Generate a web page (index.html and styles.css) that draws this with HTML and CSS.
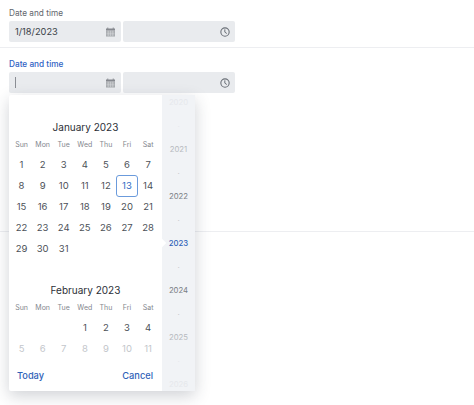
FILE: index.html
```html
<!DOCTYPE html>
<html lang="en">
<head>
    <meta charset="UTF-8">
    <meta name="viewport" content="width=device-width, initial-scale=1.0">
    <title>Date and time</title>
    <link rel="stylesheet" href="styles.css">
</head>
<body>
    <section class="field-section first">
        <label class="field-label">Date and time</label>
        <div class="field-row">
            <div class="input date-input">
                <span class="input-value">1/18/2023</span>
                <svg class="icon cal-icon" viewBox="0 0 10 10"><path fill="#85888e" d="M1.5 0h1v1h5V0h1v1H10v2.2H0V1h1.5z"/><path fill="#a3a6ab" d="M0 3.2h10V10H0z"/><path stroke="#dfe1e4" stroke-width=".5" fill="none" d="M.5 5h9M.5 6.6h9M.5 8.2h9M2.5 3.6v6M5 3.6v6M7.5 3.6v6"/></svg>
            </div>
            <div class="input time-input">
                <svg class="icon" viewBox="0 0 12 12"><circle cx="6" cy="6" r="5" fill="none" stroke="#6b7078" stroke-width="1.3"/><path d="M5.8 2.8v3.4l2.4 1.6" fill="none" stroke="#6b7078" stroke-width="1.2"/></svg>
            </div>
        </div>
    </section>

    <section class="field-section second">
        <label class="field-label active">Date and time</label>
        <div class="field-row">
            <div class="input date-input">
                <span class="caret"></span>
                <svg class="icon cal-icon" viewBox="0 0 10 10"><path fill="#85888e" d="M1.5 0h1v1h5V0h1v1H10v2.2H0V1h1.5z"/><path fill="#a3a6ab" d="M0 3.2h10V10H0z"/><path stroke="#dfe1e4" stroke-width=".5" fill="none" d="M.5 5h9M.5 6.6h9M.5 8.2h9M2.5 3.6v6M5 3.6v6M7.5 3.6v6"/></svg>
            </div>
            <div class="input time-input">
                <svg class="icon" viewBox="0 0 12 12"><circle cx="6" cy="6" r="5" fill="none" stroke="#6b7078" stroke-width="1.3"/><path d="M5.8 2.8v3.4l2.4 1.6" fill="none" stroke="#6b7078" stroke-width="1.2"/></svg>
            </div>
        </div>
    </section>

    <div class="picker">
        <div class="calendar">
            <div class="month">
                <h2 class="month-title">January 2023</h2>
                <div class="days">
                    <span class="dow">Sun</span><span class="dow">Mon</span><span class="dow">Tue</span><span class="dow">Wed</span><span class="dow">Thu</span><span class="dow">Fri</span><span class="dow">Sat</span>
                    <span>1</span><span>2</span><span>3</span><span>4</span><span>5</span><span>6</span><span>7</span>
                    <span>8</span><span>9</span><span>10</span><span>11</span><span>12</span><span class="today">13</span><span>14</span>
                    <span>15</span><span>16</span><span>17</span><span>18</span><span>19</span><span>20</span><span>21</span>
                    <span>22</span><span>23</span><span>24</span><span>25</span><span>26</span><span>27</span><span>28</span>
                    <span>29</span><span>30</span><span>31</span>
                </div>
            </div>
            <div class="month feb">
                <h2 class="month-title">February 2023</h2>
                <div class="days">
                    <span class="dow">Sun</span><span class="dow">Mon</span><span class="dow">Tue</span><span class="dow">Wed</span><span class="dow">Thu</span><span class="dow">Fri</span><span class="dow">Sat</span>
                    <span></span><span></span><span></span><span>1</span><span>2</span><span>3</span><span>4</span>
                    <span class="fade">5</span><span class="fade">6</span><span class="fade">7</span><span class="fade">8</span><span class="fade">9</span><span class="fade">10</span><span class="fade">11</span>
                </div>
            </div>
            <div class="picker-footer">
                <a class="link">Today</a>
                <a class="link">Cancel</a>
            </div>
        </div>
        <div class="years">
            <span class="year ghost">2020</span>
            <span class="tick ghost">&middot;</span>
            <span class="year dim">2021</span>
            <span class="tick">&middot;</span>
            <span class="year">2022</span>
            <span class="tick">&middot;</span>
            <span class="year current">2023</span>
            <span class="tick">&middot;</span>
            <span class="year">2024</span>
            <span class="tick">&middot;</span>
            <span class="year dim">2025</span>
            <span class="tick ghost">&middot;</span>
            <span class="year ghost">2026</span>
        </div>
    </div>
</body>
</html>
```

FILE: styles.css
```css
* {
    margin: 0;
    padding: 0;
    box-sizing: border-box;
}

body {
    position: relative;
    height: 405px;
    overflow: hidden;
    background: #fff;
    color: #3a3f47;
    font-family: Inter, "Liberation Sans", sans-serif;
    font-size: 10px;
}

.field-section {
    padding: 7px 9px 0;
    border-bottom: 1px solid #edeef1;
}

.first {
    height: 48px;
}

.second {
    height: 184px;
    padding-top: 10px;
}

.field-label {
    display: block;
    height: 14px;
    font-size: 8.25px;
    line-height: 12px;
    color: #62666d;
}

.field-label.active {
    color: #2f62c4;
    font-weight: 500;
}

.field-row {
    display: flex;
    gap: 2px;
    width: 226px;
}

.input {
    flex: 1;
    height: 21px;
    display: flex;
    align-items: center;
    justify-content: space-between;
    padding: 0 5px 0 6px;
    background: #e9ebee;
    border-radius: 2px;
}

.time-input {
    justify-content: flex-end;
}

.input-value {
    font-size: 9.25px;
    color: #3a3f47;
}

.caret {
    width: 1px;
    height: 11px;
    background: #8b8e94;
}

.icon {
    width: 10px;
    height: 10px;
    flex: none;
}

.cal-icon {
    width: 9px;
    margin-right: 1px;
}

.picker {
    position: absolute;
    top: 95px;
    left: 9px;
    width: 186px;
    height: 296px;
    display: flex;
    background: #fff;
    border-radius: 2px;
    box-shadow: 0 5px 16px rgba(40, 50, 70, 0.22);
}

.calendar {
    width: 153px;
    padding: 0 2px;
    display: flex;
    flex-direction: column;
}

.month {
    padding-top: 24px;
}

.month-title {
    height: 16px;
    text-align: center;
    font-size: 10px;
    line-height: 16px;
    font-weight: 400;
    color: #2c3037;
}

.feb {
    padding-top: 23px;
    height: 90px;
}

.days {
    display: grid;
    grid-template-columns: repeat(7, 21.1px);
    grid-template-rows: 18px;
    grid-auto-rows: 21px;
    margin-top: 1px;
    font-size: 9.5px;
    color: #4c5158;
    text-align: center;
}

.days span {
    display: flex;
    align-items: center;
    justify-content: center;
}

.days .dow {
    height: 16px;
    font-size: 7px;
    color: #83878e;
}

.days .today {
    width: 22px;
    height: 22px;
    margin: -0.5px;
    border: 1px solid #6b9bdc;
    border-radius: 3px;
    color: #2f6cc4;
}

.days .fade {
    color: #c3c6cb;
}

.picker-footer {
    display: flex;
    justify-content: space-between;
    padding: 0 7px 0 6px;
    margin-bottom: 10px;
    margin-top: auto;
}

.link {
    font-size: 9.25px;
    font-weight: 500;
    color: #2f62b8;
}

.years {
    width: 33px;
    display: flex;
    flex-direction: column;
    align-items: center;
    background: #f1f3f6;
    font-size: 7.75px;
    color: #7a7e85;
    overflow: hidden;
}

.year,
.tick {
    flex: none;
    height: 23.5px;
    line-height: 23.5px;
    position: relative;
    top: -4px;
}

.year.dim {
    color: #b7bac0;
}

.year.ghost,
.tick.ghost {
    color: #e6e8ec;
}

.tick {
    color: #c3c6cb;
}

.year.current {
    color: #2f62b8;
    font-weight: 500;
}

.picker::after {
    content: "";
    position: absolute;
    left: 150px;
    top: 145px;
    width: 6px;
    height: 6px;
    background: #fff;
    transform: rotate(45deg);
}
```
